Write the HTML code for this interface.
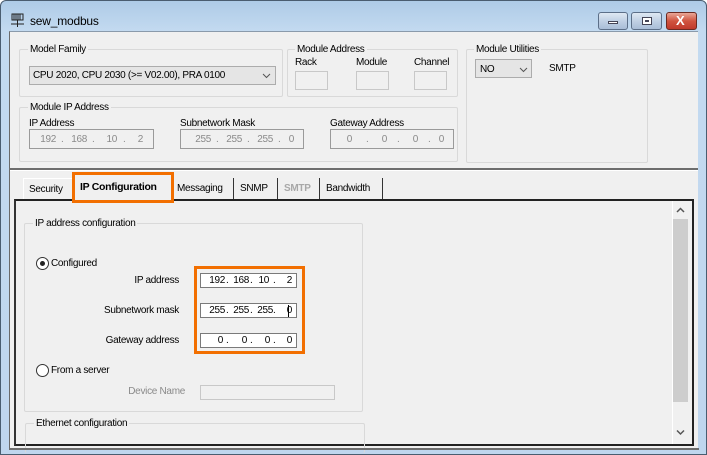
<!DOCTYPE html>
<html><head><meta charset="utf-8"><style>
*{margin:0;padding:0;box-sizing:border-box}
body{width:707px;height:455px;overflow:hidden;background:#fff;font-family:"Liberation Sans",sans-serif;font-size:10px;letter-spacing:-0.3px;color:#000;position:relative}
.a{position:absolute}
.frame{left:0;top:0;width:707px;height:455px;background:linear-gradient(#aecbe7,#c3daf0 30px,#bfd6ee);border:1px solid #4a5d70;border-radius:6px 6px 0 0}
.client{left:9px;top:31px;width:689px;height:419px;background:#f0f0f0;border-left:1px solid #6a6a6a;border-top:1px solid #8a9aab}
.grp{position:absolute;border:1px solid #d9d9d9;border-radius:2px}
.gt{position:absolute;top:-7px;left:8px;background:#f0f0f0;padding:0 2px;line-height:13px}
.box{position:absolute;border:1px solid #a8a8a8;background:#f0f0f0}
.ib{position:absolute;border:1px solid #7a7a7a;background:#fff;line-height:13px;color:#000}
.lb{position:absolute;line-height:13px;white-space:nowrap}
.grey{color:#8a8a8a}
.btn{position:absolute;top:12px;height:18px;border:1px solid #5c6f88;border-radius:3px;background:linear-gradient(#dfe8f3,#c0d0e4 50%,#a9bdd7)}
.tab{position:absolute;top:178px;height:21px;line-height:21px;padding-left:5px}
.radio{position:absolute;width:13px;height:13px;border:1px solid #333;border-radius:50%;background:#fff}
.s{position:absolute;top:0;line-height:13px;text-align:right}
</style></head><body>
<div class="a frame"></div>
<svg class="a" style="left:10px;top:13px" width="16" height="15" viewBox="0 0 16 15"><rect x="2" y="1" width="11" height="6" fill="none" stroke="#222"/><path d="M4 1v6M6 1v6M8 1v6M10 1v6M7.5 7v4M1 11h13M7.5 11v3" stroke="#222" fill="none"/></svg>
<div class="lb" style="left:30px;top:14px;font-size:12px;line-height:15px;letter-spacing:-0.2px">sew_modbus</div>
<div class="btn" style="left:598px;width:30px"><div class="a" style="left:9px;top:8px;width:10px;height:3px;background:#fff;border:1px solid #445"></div></div>
<div class="btn" style="left:631px;width:31px"><div class="a" style="left:10px;top:4px;width:10px;height:8px;background:#fff;border:1px solid #445"><div class="a" style="left:2px;top:2px;width:4px;height:2px;background:#445"></div></div></div>
<div class="btn" style="left:666px;width:31px;border-color:#6b2a22;background:linear-gradient(#e9a797,#d0543f 50%,#c0392b)"><div class="a" style="left:9px;top:0px;color:#fff;font-weight:bold;font-size:13px;line-height:16px">X</div></div>
<div class="a client"></div>

<div class="grp" style="left:19px;top:49px;width:264px;height:48px"><span class="gt">Model Family</span></div>
<div class="box" style="left:29px;top:66px;width:247px;height:19px;background:#e5e5e5;border-color:#acacac"><span class="lb" style="left:3px;top:2px">CPU 2020, CPU 2030 (&gt;= V02.00), PRA 0100</span><svg class="a" style="left:232px;top:6px" width="9" height="6"><path d="M1 1l3.5 3.5L8 1" stroke="#555" fill="none"/></svg></div>

<div class="grp" style="left:287px;top:49px;width:171px;height:48px"><span class="gt" style="left:7px">Module Address</span></div>
<div class="lb" style="left:295px;top:56px">Rack</div>
<div class="lb" style="left:356px;top:56px">Module</div>
<div class="lb" style="left:414px;top:56px">Channel</div>
<div class="box" style="left:295px;top:71px;width:33px;height:19px;border-color:#c8c8c8"></div>
<div class="box" style="left:356px;top:71px;width:33px;height:19px;border-color:#c8c8c8"></div>
<div class="box" style="left:414px;top:71px;width:33px;height:19px;border-color:#c8c8c8"></div>

<div class="grp" style="left:466px;top:49px;width:182px;height:114px"><span class="gt" style="left:7px">Module Utilities</span></div>
<div class="box" style="left:475px;top:59px;width:57px;height:19px;background:#e5e5e5;border-color:#acacac"><span class="lb" style="left:4px;top:3px">NO</span><svg class="a" style="left:43px;top:7px" width="9" height="6"><path d="M1 1l3.5 3.5L8 1" stroke="#555" fill="none"/></svg></div>
<div class="lb" style="left:549px;top:62px">SMTP</div>

<div class="grp" style="left:19px;top:107px;width:439px;height:55px"><span class="gt">Module IP Address</span></div>
<div class="lb" style="left:29px;top:117px">IP Address</div>
<div class="lb" style="left:180px;top:117px">Subnetwork Mask</div>
<div class="lb" style="left:330px;top:117px">Gateway Address</div>
<div class="box grey" style="left:29px;top:129px;width:125px;height:20px;border-color:#9a9a9a"><div class="a" style="top:3px;left:0;width:125px">
<span class="s" style="left:4px;width:22px">192</span><span class="s" style="left:31px">.</span><span class="s" style="left:35px;width:22px">168</span><span class="s" style="left:62px">.</span><span class="s" style="left:66px;width:21px">10</span><span class="s" style="left:93px">.</span><span class="s" style="left:97px;width:16px">2</span></div></div>
<div class="box grey" style="left:180px;top:129px;width:124px;height:20px;border-color:#9a9a9a"><div class="a" style="top:3px;left:0;width:124px">
<span class="s" style="left:4px;width:26px">255</span><span class="s" style="left:35px">.</span><span class="s" style="left:39px;width:22px">255</span><span class="s" style="left:66px">.</span><span class="s" style="left:70px;width:22px">255</span><span class="s" style="left:97px">.</span><span class="s" style="left:101px;width:12px">0</span></div></div>
<div class="box grey" style="left:330px;top:129px;width:124px;height:20px;border-color:#9a9a9a"><div class="a" style="top:3px;left:0;width:124px">
<span class="s" style="left:4px;width:17px">0</span><span class="s" style="left:35px">.</span><span class="s" style="left:39px;width:17px">0</span><span class="s" style="left:66px">.</span><span class="s" style="left:70px;width:17px">0</span><span class="s" style="left:97px">.</span><span class="s" style="left:101px;width:12px">0</span></div></div>

<div class="a" style="left:9px;top:168px;width:689px;height:2px;background:#6d6d6d"></div>
<div class="a" style="left:10px;top:170px;width:688px;height:1px;background:#fff"></div>

<div class="tab" style="left:23px;width:50px;border-top:1px solid #fff;border-left:1px solid #fff">Security</div>
<div class="tab" style="left:172px;width:62px;border-right:1px solid #333">Messaging</div>
<div class="tab" style="left:235px;width:43px;border-right:1px solid #333">SNMP</div>
<div class="tab" style="left:279px;width:41px;border-right:1px solid #333;font-weight:bold;color:#a8a8a8">SMTP</div>
<div class="tab" style="left:321px;width:62px;border-right:1px solid #333">Bandwidth</div>

<div class="a" style="left:14px;top:199px;width:680px;height:247px;border:2px solid #222;border-left-color:#333;background:#f0f0f0"></div>
<div class="a" style="left:74px;top:174px;width:98px;height:28px;background:#f0f0f0;border-left:1px solid #fff"></div>
<div class="lb" style="left:80px;top:181px;font-weight:bold;font-size:10.5px">IP Configuration</div>
<div class="a" style="left:72px;top:172px;width:102px;height:31px;border:3px solid #f26f00"></div>

<div class="grp" style="left:24px;top:223px;width:339px;height:189px"><span class="gt">IP address configuration</span></div>
<div class="radio" style="left:36px;top:257px"><div class="a" style="left:3px;top:3px;width:5px;height:5px;border-radius:50%;background:#222"></div></div>
<div class="lb" style="left:51px;top:257px">Configured</div>
<div class="lb" style="left:90px;top:274px;width:89px;text-align:right">IP address</div>
<div class="lb" style="left:90px;top:304px;width:89px;text-align:right">Subnetwork mask</div>
<div class="lb" style="left:90px;top:334px;width:89px;text-align:right">Gateway address</div>
<div class="ib" style="left:200px;top:273px;width:97px;height:15px">
<span class="s" style="left:0;width:24px">192</span><span class="s" style="left:25px">.</span><span class="s" style="left:28px;width:20px">168</span><span class="s" style="left:49px">.</span><span class="s" style="left:52px;width:16px">10</span><span class="s" style="left:72px">.</span><span class="s" style="left:75px;width:16px">2</span></div>
<div class="ib" style="left:200px;top:303px;width:97px;height:15px">
<span class="s" style="left:0;width:24px">255</span><span class="s" style="left:25px">.</span><span class="s" style="left:28px;width:20px">255</span><span class="s" style="left:49px">.</span><span class="s" style="left:52px;width:20px">255</span><span class="s" style="left:72px">.</span><span class="s" style="left:75px;width:16px">0</span><div class="a" style="left:87px;top:1px;width:1px;height:12px;background:#000"></div></div>
<div class="ib" style="left:200px;top:333px;width:97px;height:15px">
<span class="s" style="left:0;width:22px">0</span><span class="s" style="left:25px">.</span><span class="s" style="left:28px;width:18px">0</span><span class="s" style="left:49px">.</span><span class="s" style="left:52px;width:17px">0</span><span class="s" style="left:72px">.</span><span class="s" style="left:75px;width:16px">0</span></div>
<div class="a" style="left:194px;top:266px;width:111px;height:88px;border:3px solid #f26f00"></div>
<div class="radio" style="left:36px;top:364px"></div>
<div class="lb" style="left:51px;top:364px">From a server</div>
<div class="lb grey" style="left:100px;top:385px;width:85px;text-align:right">Device Name</div>
<div class="a" style="left:200px;top:385px;width:135px;height:15px;border:1px solid #c8c8c8;background:#f0f0f0"></div>

<div class="grp" style="left:25px;top:423px;width:340px;height:30px;border-bottom:none"><span class="gt">Ethernet configuration</span></div>

<div class="a" style="left:672px;top:201px;width:17px;height:243px;background:#f0f0f0;border-left:1px solid #fff"></div>
<div class="a" style="left:673px;top:219px;width:15px;height:183px;background:#cdcdcd"></div>
<svg class="a" style="left:676px;top:207px" width="9" height="7"><path d="M1 5l3.5-3.5L8 5" stroke="#555" stroke-width="1.5" fill="none"/></svg>
<svg class="a" style="left:676px;top:429px" width="9" height="7"><path d="M1 1.5l3.5 3.5L8 1.5" stroke="#555" stroke-width="1.5" fill="none"/></svg>
<div class="a" style="left:9px;top:448px;width:690px;height:2px;background:#6d6d6d"></div>
</body></html>
